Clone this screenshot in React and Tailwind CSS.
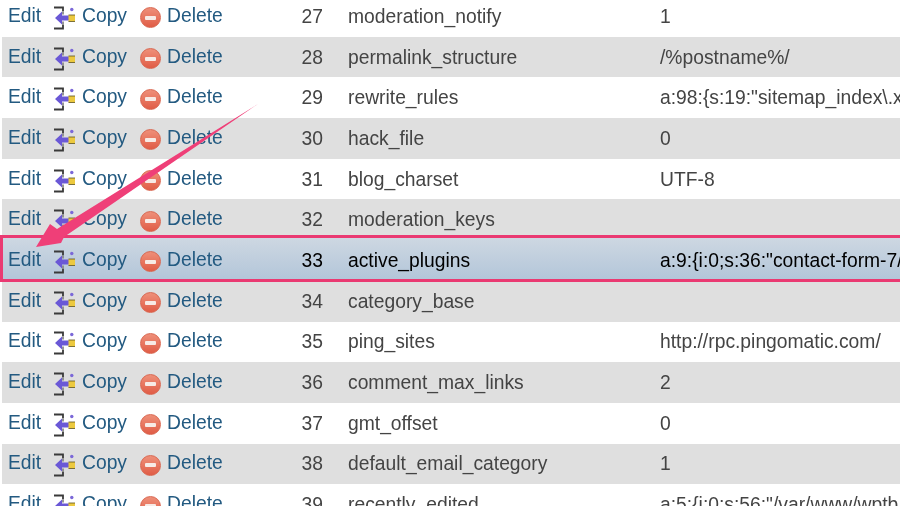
const rows = [
  [27, 'moderation_notify', '1'],
  [28, 'permalink_structure', '/%postname%/'],
  [29, 'rewrite_rules', 'a:98:{s:19:"sitemap_index\\.x'],
  [30, 'hack_file', '0'],
  [31, 'blog_charset', 'UTF-8'],
  [32, 'moderation_keys', ''],
  [33, 'active_plugins', 'a:9:{i:0;s:36:"contact-form-7/'],
  [34, 'category_base', ''],
  [35, 'ping_sites', 'http://rpc.pingomatic.com/'],
  [36, 'comment_max_links', '2'],
  [37, 'gmt_offset', '0'],
  [38, 'default_email_category', '1'],
  [39, 'recently_edited', 'a:5:{i:0;s:56:"/var/www/wptb'],
]

function CopyIcon() {
  return (
    <svg width="23" height="24" viewBox="0 0 23 24" className="mt-[3px] shrink-0">
      <path d="M1 1.500h9v4M10 18.500v4H1" stroke="#3a3a3a" strokeWidth="1.800" fill="none" />
      <path d="M10 6v2.500M10 15.500v3" stroke="#8a8a8a" strokeWidth="1.800" fill="none" />
      <path d="M2 12l7-6.500v4h7v5H9v4z" fill="#6a58d6" />
      <rect x="15.500" y="9" width="6.500" height="6.500" fill="#ecc93f" />
      <path d="M15.500 9h6.500M15.500 15.500h6.500" stroke="#5c5220" strokeWidth="0.800" />
      <circle cx="18.800" cy="3.500" r="1.700" fill="#7b68d8" />
    </svg>
  )
}

function DeleteIcon() {
  return (
    <span className="mt-[3px] flex h-[21px] w-[21px] shrink-0 items-center justify-center rounded-full border border-[#d9664f] bg-gradient-to-b from-[#ee8f79] to-[#e05c46]">
      <span className="h-[4px] w-[11px] rounded-[1px] bg-[#f7ebe6]" />
    </span>
  )
}

function Row({ row, index }) {
  const [id, name, value] = row
  const marked = id === 33
  const grey = index % 2 === 1
  const textColor = marked ? 'text-black' : 'text-[#444]'
  return (
    <div
      className={`flex shrink-0 items-center overflow-hidden ${
        marked
          ? '-mt-[3px] h-[43.7px] bg-gradient-to-b from-[#ced8e2] to-[#b2c5d9] pl-[8px] pt-[3px]'
          : grey
            ? 'ml-[2px] h-[40.7px] bg-[#dfdfdf] pl-[6px]'
            : 'h-[40.7px] bg-white pl-[8px]'
      }`}
    >
      <a className="w-[45px] shrink-0 text-[#235a81]">Edit</a>
      <CopyIcon />
      <a className="ml-[6px] w-[58px] shrink-0 text-[#235a81]">Copy</a>
      <DeleteIcon />
      <a className="ml-[6px] w-[132px] shrink-0 text-[#235a81]">Delete</a>
      <span className={`mt-[2px] w-[24px] shrink-0 text-right ${textColor}`}>{id}</span>
      <span className={`ml-[25px] mt-[2px] w-[312px] shrink-0 ${textColor}`}>{name}</span>
      <span className={`mt-[2px] whitespace-nowrap ${textColor}`}>{value}</span>
    </div>
  )
}

export default function App() {
  return (
    <div className="relative h-[506px] w-[900px] overflow-hidden bg-white font-['Liberation_Sans',Arial,sans-serif] text-[19.3px]">
      <div className="-mt-[4px] flex flex-col blur-[0.3px]">
        {rows.map((row, i) => (
          <Row key={row[0]} row={row} index={i} />
        ))}
      </div>
      <div className="absolute left-0 right-0 top-[235px] h-[47px] border-[3px] border-r-0 border-[#ea3a72]" />
      <svg width="900" height="506" className="absolute left-0 top-0" fill="none">
        <path d="M258 104L57 229L50 224L36 247L61 243L64 237z" fill="#ef3f78" />
      </svg>
    </div>
  )
}
